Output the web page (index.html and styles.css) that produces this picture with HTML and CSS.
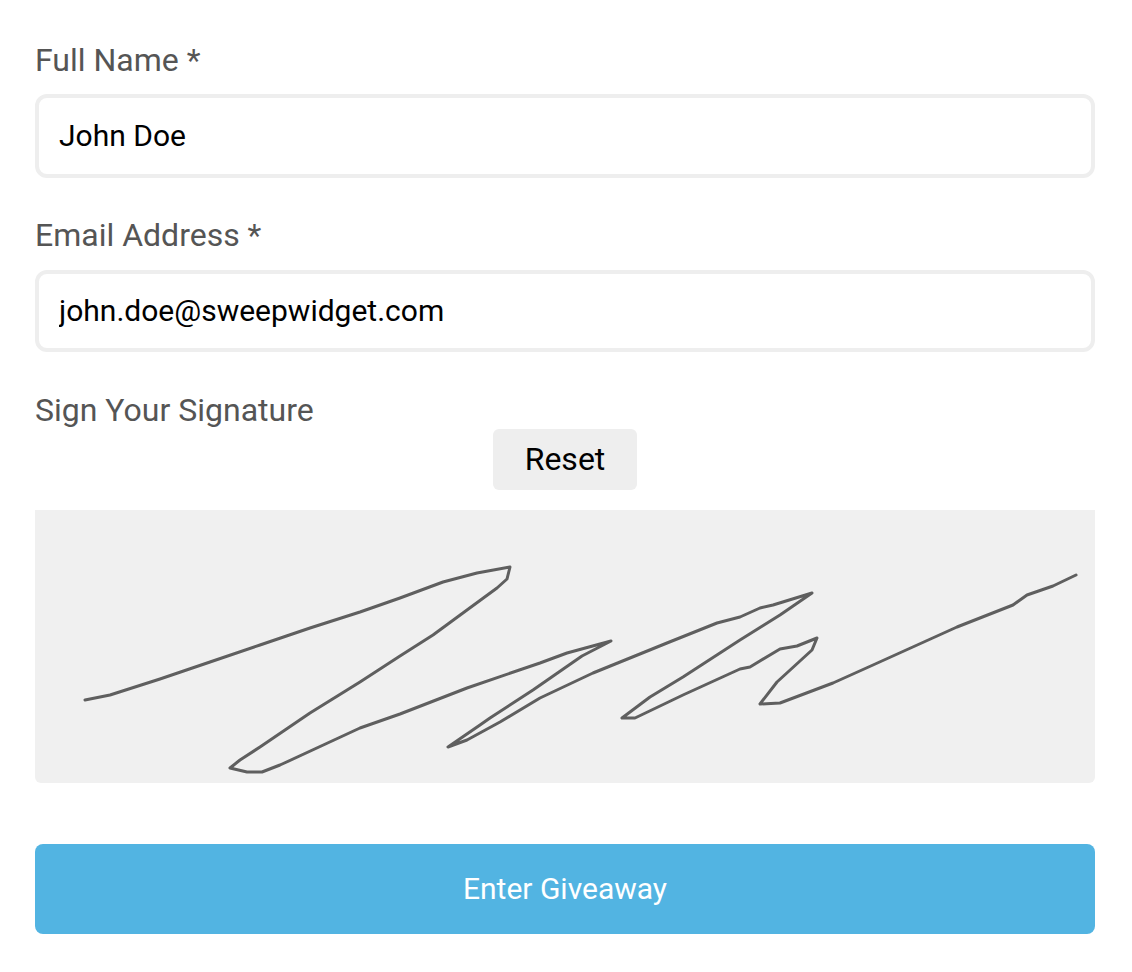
FILE: index.html
```html
<!DOCTYPE html>
<html lang="en">
<head>
    <meta charset="UTF-8">
    <meta name="viewport" content="width=device-width, initial-scale=1.0">
    <title>Enter Giveaway</title>
    <link rel="stylesheet" href="styles.css">
</head>
<body>

<form class="entry-form">

    <!-- Contact fields -->
    <div class="field">
        <label for="fullName">Full Name *</label>
        <input type="text" id="fullName" value="John Doe">
    </div>
    <div class="field field-email">
        <label for="email">Email Address *</label>
        <input type="text" id="email" value="john.doe@sweepwidget.com">
    </div>

    <!-- Signature pad -->
    <div class="signature">
        <span class="signature-label">Sign Your Signature</span>
        <button type="button" class="reset-btn">Reset</button>
        <svg class="signature-pad" viewBox="35 510 1060 273" fill="none" stroke="#5f5f5f" stroke-width="3" stroke-linejoin="round" stroke-linecap="round">
            <path d="M85 700 L110 695 L160 679 L210 662 L260 645 L310 628 L360 612 L400 598 L443 582 L477 573 L510 567 L507 579 L497 588 L467 610 L433 635 L400 656 L360 682 L310 713 L260 747 L240 760 L230 768 L247 772 L262 772 L280 765 L360 728 L400 714 L467 688 L540 663 L567 653 L611 641 L582 656 L533 690 L490 718 L480 725 L448 747 L467 740 L500 722 L540 698 L593 673 L667 643 L717 623 L740 617 L760 608 L773 605 L812 593 L780 615 L740 640 L683 677 L650 697 L622 718 L635 718 L683 695 L740 669 L750 667 L780 649 L797 646 L817 638 L812 650 L777 682 L760 704 L780 703 L833 683 L873 665 L957 627 L1013 605 L1027 595 L1053 586 L1076 575"/>
        </svg>
    </div>

    <button type="button" class="submit-btn">Enter Giveaway</button>
</form>

</body>
</html>
```

FILE: styles.css
```css
/* Basic Reset */
* {
    margin: 0;
    padding: 0;
    box-sizing: border-box;
}

body {
    font-family: Roboto, Arial, sans-serif;
    background-color: #fff;
    color: #555;
}

.entry-form {
    padding: 42px 37px 0 35px;
}

.field {
    margin-bottom: 39px;
}

.field-email {
    margin-bottom: 40px;
}

.field label,
.signature-label {
    display: block;
    font-size: 32px;
    line-height: 36px;
    color: #555;
}

.field label {
    margin-bottom: 16px;
}

.field-email label {
    margin-bottom: 17px;
}

.field input {
    display: block;
    width: 100%;
    height: 84px;
    padding: 0 20px 2px;
    border: 4px solid #eee;
    border-radius: 12px;
    font-family: inherit;
    font-size: 30px;
    color: #000;
    outline: none;
}

.field-email input {
    height: 82px;
}

.signature {
    display: flex;
    flex-direction: column;
    align-items: center;
}

.signature-label {
    align-self: flex-start;
}

.reset-btn {
    width: 144px;
    height: 61px;
    margin-top: 1px;
    margin-bottom: 20px;
    padding-bottom: 2px;
    background-color: #eee;
    border: none;
    border-radius: 6px;
    font-family: inherit;
    font-size: 32px;
    color: #000;
}

.signature-pad {
    display: block;
    width: 100%;
    height: 273px;
    background-color: #f0f0f0;
    border-radius: 0 0 6px 6px;
}

.submit-btn {
    display: block;
    width: 100%;
    height: 90px;
    margin-top: 61px;
    padding-bottom: 2px;
    background-color: #52b4e2;
    border: none;
    border-radius: 8px;
    font-family: inherit;
    font-size: 30px;
    color: #fff;
}
```
